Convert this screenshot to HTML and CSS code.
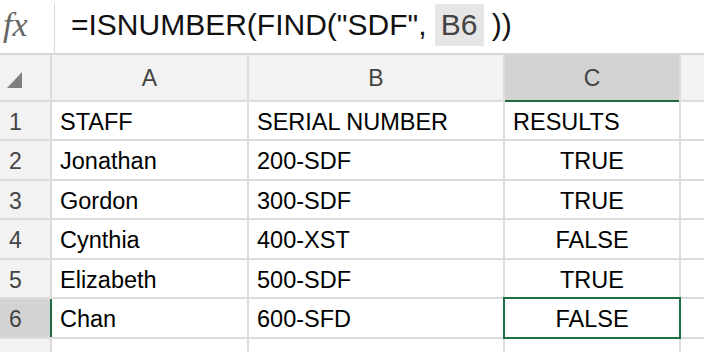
FILE: index.html
```html
<!DOCTYPE html>
<html>
<head>
  <title>ISNUMBER FIND</title>
  <link rel="stylesheet" href="styles.css">
</head>
<body>
  <div class="formula-bar">
    <div class="fx">fx</div>
    <div class="formula">=ISNUMBER(FIND("SDF", <span class="ref">B6</span> ))</div>
  </div>

  <div class="sheet">
    <div class="head corner">
      <svg width="50" height="45" viewBox="0 0 50 45"><polygon points="22,17 22,33 7,33" fill="#7f7f7f"/></svg>
    </div>
    <div class="head col">A</div>
    <div class="head col">B</div>
    <div class="head col active">C</div>
    <div class="head col"></div>

    <div class="head row">1</div>
    <div class="cell">STAFF</div>
    <div class="cell">SERIAL NUMBER</div>
    <div class="cell">RESULTS</div>
    <div class="cell"></div>

    <div class="head row">2</div>
    <div class="cell">Jonathan</div>
    <div class="cell">200-SDF</div>
    <div class="cell center">TRUE</div>
    <div class="cell"></div>

    <div class="head row">3</div>
    <div class="cell">Gordon</div>
    <div class="cell">300-SDF</div>
    <div class="cell center">TRUE</div>
    <div class="cell"></div>

    <div class="head row">4</div>
    <div class="cell">Cynthia</div>
    <div class="cell">400-XST</div>
    <div class="cell center">FALSE</div>
    <div class="cell"></div>

    <div class="head row">5</div>
    <div class="cell">Elizabeth</div>
    <div class="cell">500-SDF</div>
    <div class="cell center">TRUE</div>
    <div class="cell"></div>

    <div class="head row active">6</div>
    <div class="cell">Chan</div>
    <div class="cell">600-SFD</div>
    <div class="cell center selected">FALSE</div>
    <div class="cell"></div>

    <div class="head row"></div>
    <div class="cell"></div>
    <div class="cell"></div>
    <div class="cell"></div>
    <div class="cell"></div>
  </div>
</body>
</html>
```

FILE: styles.css
```css
html, body {
  margin: 0;
  height: 352px;
  overflow: hidden;
  background: #fff;
  font-family: "Liberation Sans", Arial, sans-serif;
}

.formula-bar {
  display: flex;
  align-items: stretch;
  height: 53px;
  border-bottom: 2px solid #d6d6d6;
}

.fx {
  width: 55px;
  box-sizing: border-box;
  padding: 3px 0 0 3px;
  font-family: "Liberation Serif", serif;
  font-style: italic;
  font-size: 34px;
  color: #666;
  border-right: 1px solid #dadada;
  margin: 3px 0 0 0;
}

.formula {
  display: flex;
  align-items: center;
  padding: 0 0 4px 16px;
  font-size: 30px;
  color: #111;
  white-space: pre;
}

.formula .ref {
  display: inline-block;
  padding: 0 6px;
  line-height: 42px;
  background: #e6e6e6;
  color: #444;
}

.sheet {
  display: grid;
  grid-template-columns: 50px 195px 254px 174px 1fr;
  grid-template-rows: 45px 37px 38px 37px 38px 37px 38px 37px;
  gap: 2px;
  background: #dcdcdc;
}

.head {
  background: #f2f2f2;
  color: #444;
  font-size: 23px;
  display: flex;
  align-items: center;
}

.head.col {
  justify-content: center;
  padding-top: 2px;
}

.head.row {
  padding: 3px 0 0 9px;
}

.head.active {
  background: #d3d3d3;
}

.head.col.active {
  box-shadow: 0 2px 0 #1e6e41;
}

.head.row.active {
  box-shadow: 2px 0 0 #1e6e41;
}

.corner {
  display: block;
}

.cell {
  background: #fff;
  color: #000;
  font-size: 23.5px;
  display: flex;
  align-items: center;
  padding: 3px 0 0 8px;
}

.cell.center {
  justify-content: center;
  padding-left: 0;
}

.cell.selected {
  outline: 2px solid #1e6e41;
  position: relative;
  z-index: 1;
}
```
